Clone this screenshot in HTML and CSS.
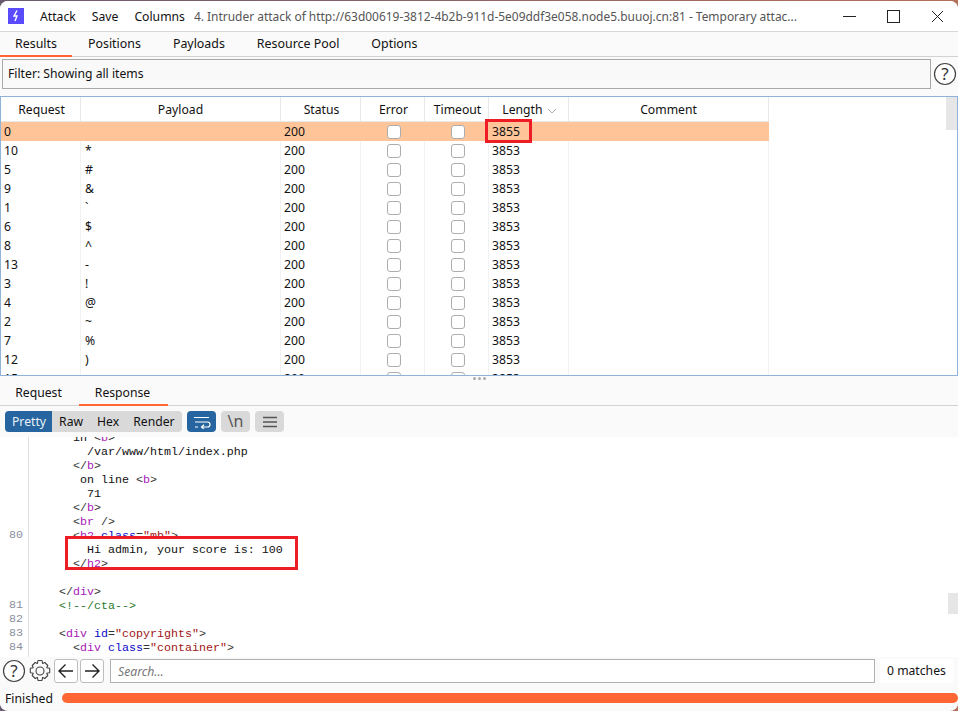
FILE: index.html
```html
<!DOCTYPE html>
<html lang="en">
<head>
<meta charset="utf-8">
<title>Intruder attack</title>
<link rel="stylesheet" href="styles.css">
</head>
<body>
<div class="window">
  <header class="titlebar">
    <svg class="logo" width="16" height="16" viewBox="0 0 16 16"><rect width="16" height="16" fill="#5a4bff"/><path d="M9 2.500 6 8h3l-2 5" fill="none" stroke="#fff" stroke-width="1.400"/></svg>
    <nav class="menu"><span>Attack</span><span>Save</span><span>Columns</span></nav>
    <div class="title">4. Intruder attack of http://63d00619-3812-4b2b-911d-5e09ddf3e058.node5.buuoj.cn:81 - Temporary attac...</div>
    <div class="winctl">
      <svg width="13" height="13" viewBox="0 0 13 13"><path d="M0 6.500h13" stroke="#222" stroke-width="1"/></svg>
      <svg width="13" height="13" viewBox="0 0 13 13"><rect x=".5" y=".5" width="12" height="12" fill="none" stroke="#222"/></svg>
      <svg width="13" height="13" viewBox="0 0 13 13"><path d="M1 1l11 11M12 1 1 12" stroke="#222" stroke-width="1"/></svg>
    </div>
  </header>
  <nav class="tabs main-tabs">
    <span class="tab active">Results</span><span class="tab">Positions</span><span class="tab">Payloads</span><span class="tab">Resource Pool</span><span class="tab">Options</span>
  </nav>
  <div class="filter-row">
    <div class="filter">Filter: Showing all items</div>
    <svg class="help" width="24" height="24" viewBox="0 0 24 24"><circle cx="12" cy="12" r="10.500" fill="#fff" stroke="#444" stroke-width="1.200"/><text x="12" y="17.500" text-anchor="middle" class="qmark">?</text></svg>
  </div>
  <section class="table">
    <div class="row head">
      <div class="nudge">Request</div><div>Payload</div><div class="nudge">Status</div><div class="nudge">Error</div><div class="nudge">Timeout</div>
      <div class="nudge">Length <svg width="10" height="6" viewBox="0 0 10 6"><path d="M1 1l4 4 4-4" fill="none" stroke="#aaa"/></svg></div><div>Comment</div>
    </div>
    <div class="row sel"><div>0</div><div class="pl"></div><div class="st">200</div><div class="c"><i class="cb"></i></div><div class="c"><i class="cb"></i></div><div class="len">3855</div><div></div></div>
    <div class="row"><div>10</div><div class="pl">*</div><div class="st">200</div><div class="c"><i class="cb"></i></div><div class="c"><i class="cb"></i></div><div class="len">3853</div><div></div></div>
    <div class="row"><div>5</div><div class="pl">#</div><div class="st">200</div><div class="c"><i class="cb"></i></div><div class="c"><i class="cb"></i></div><div class="len">3853</div><div></div></div>
    <div class="row"><div>9</div><div class="pl">&amp;</div><div class="st">200</div><div class="c"><i class="cb"></i></div><div class="c"><i class="cb"></i></div><div class="len">3853</div><div></div></div>
    <div class="row"><div>1</div><div class="pl">`</div><div class="st">200</div><div class="c"><i class="cb"></i></div><div class="c"><i class="cb"></i></div><div class="len">3853</div><div></div></div>
    <div class="row"><div>6</div><div class="pl">$</div><div class="st">200</div><div class="c"><i class="cb"></i></div><div class="c"><i class="cb"></i></div><div class="len">3853</div><div></div></div>
    <div class="row"><div>8</div><div class="pl">^</div><div class="st">200</div><div class="c"><i class="cb"></i></div><div class="c"><i class="cb"></i></div><div class="len">3853</div><div></div></div>
    <div class="row"><div>13</div><div class="pl">-</div><div class="st">200</div><div class="c"><i class="cb"></i></div><div class="c"><i class="cb"></i></div><div class="len">3853</div><div></div></div>
    <div class="row"><div>3</div><div class="pl">!</div><div class="st">200</div><div class="c"><i class="cb"></i></div><div class="c"><i class="cb"></i></div><div class="len">3853</div><div></div></div>
    <div class="row"><div>4</div><div class="pl">@</div><div class="st">200</div><div class="c"><i class="cb"></i></div><div class="c"><i class="cb"></i></div><div class="len">3853</div><div></div></div>
    <div class="row"><div>2</div><div class="pl">~</div><div class="st">200</div><div class="c"><i class="cb"></i></div><div class="c"><i class="cb"></i></div><div class="len">3853</div><div></div></div>
    <div class="row"><div>7</div><div class="pl">%</div><div class="st">200</div><div class="c"><i class="cb"></i></div><div class="c"><i class="cb"></i></div><div class="len">3853</div><div></div></div>
    <div class="row"><div>12</div><div class="pl">)</div><div class="st">200</div><div class="c"><i class="cb"></i></div><div class="c"><i class="cb"></i></div><div class="len">3853</div><div></div></div>
    <div class="row"><div>15</div><div class="pl">_</div><div class="st">200</div><div class="c"><i class="cb"></i></div><div class="c"><i class="cb"></i></div><div class="len">3853</div><div></div></div>
    <div class="scroll-thumb table-thumb"></div>
    <div class="mark mark-len"></div>
  </section>
  <div class="splitter"><i></i><i></i><i></i></div>
  <nav class="tabs sub-tabs"><span class="tab">Request</span><span class="tab active">Response</span></nav>
  <div class="toolbar">
    <div class="seg"><span class="on">Pretty</span><span>Raw</span><span>Hex</span><span>Render</span></div>
    <span class="tool on"><svg width="20" height="14" viewBox="0 0 20 14"><path d="M2 2.500h15M3 7h12.500a2.500 2.500 0 0 1 0 5H10M12 9.800 9.500 12l2.500 2.200M3 12h3" fill="none" stroke="#fff" stroke-width="1.200"/></svg></span>
    <span class="tool nl">\n</span>
    <span class="tool"><svg width="16" height="14" viewBox="0 0 16 14"><path d="M1 2.500h14M1 7h14M1 11.500h14" stroke="#555" stroke-width="1.400"/></svg></span>
  </div>
  <section class="editor">
    <div class="gutter"><span></span><span></span><span></span><span></span><span></span><span></span><span></span><span>80</span><span></span><span></span><span></span><span></span><span>81</span><span>82</span><span>83</span><span>84</span></div>
<pre class="code">      in <s>&lt;</s><b>b</b><s>&gt;</s>
        /var/www/html/index.php
      <s>&lt;/</s><b>b</b><s>&gt;</s>
       on line <s>&lt;</s><b>b</b><s>&gt;</s>
        71
      <s>&lt;/</s><b>b</b><s>&gt;</s>
      <s>&lt;</s><b>br</b> <s>/&gt;</s>
      <s>&lt;</s><b>h2</b> <u>class</u><s>=</s><em>"mb"</em><s>&gt;</s>
        Hi admin, your score is: 100
      <s>&lt;/</s><b>h2</b><s>&gt;</s>

    <s>&lt;/</s><b>div</b><s>&gt;</s>
    <q>&lt;!--/cta--&gt;</q>

    <s>&lt;</s><b>div</b> <u>id</u><s>=</s><em>"copyrights"</em><s>&gt;</s>
      <s>&lt;</s><b>div</b> <u>class</u><s>=</s><em>"container"</em><s>&gt;</s></pre>
    <div class="scroll-thumb editor-thumb"></div>
    <div class="mark mark-score"></div>
  </section>
  <div class="searchbar">
    <svg width="24" height="24" viewBox="0 0 24 24"><circle cx="12" cy="12" r="10.500" fill="#fff" stroke="#444" stroke-width="1.200"/><text x="12" y="17.500" text-anchor="middle" class="qmark">?</text></svg>
    <svg class="gear" width="24" height="24" viewBox="0 0 24 24"><path d="M10 1.500h4l.6 3 2.200-1 3 3-1.100 2.200 3 .6v4.400l-3 .6 1.100 2.200-3 3-2.200-1.100-.6 3.100h-4l-.6-3.100-2.200 1.100-3-3 1.100-2.200-3-.6V9.300l3-.6-1.100-2.200 3-3 2.200 1z" fill="none" stroke="#444" stroke-width="1.100" stroke-linejoin="round"/><circle cx="12" cy="12" r="4" fill="none" stroke="#444" stroke-width="1.100"/></svg>
    <span class="nav-btn"><svg width="18" height="16" viewBox="0 0 18 16"><path d="M16 8H2M8.500 1.500 2 8l6.500 6.500" fill="none" stroke="#222" stroke-width="1.400"/></svg></span>
    <span class="nav-btn"><svg width="18" height="16" viewBox="0 0 18 16"><path d="M2 8h14M9.500 1.500 16 8l-6.500 6.500" fill="none" stroke="#222" stroke-width="1.400"/></svg></span>
    <div class="search">Search...</div>
    <div class="matches">0 matches</div>
  </div>
  <footer class="status"><span>Finished</span><div class="progress"></div></footer>
</div>
</body>
</html>
```
FILE: styles.css
```css
* { box-sizing: border-box; }
html, body { margin: 0; padding: 0; }
body { width: 958px; height: 711px; overflow: hidden; background: linear-gradient(90deg, #6a5a70, #b5705a); font: 12.2px/17px "Noto Sans", "Open Sans", sans-serif; color: #111; }
.window { width: 958px; height: 710px; margin-top: 1px; background: #fafafa; border-radius: 8px; overflow: hidden; display: flex; flex-direction: column; }

.titlebar { height: 31px; flex: none; background: #fff; display: flex; align-items: center; padding-left: 8px; border-bottom: 1px solid #d8d8d8; }
.logo { flex: none; }
.menu { display: flex; gap: 16px; margin-left: 16px; }
.title { margin-left: 9px; flex: 1; min-width: 0; font-size: 11.95px; color: #555; white-space: nowrap; overflow: hidden; }
.winctl { display: flex; gap: 31px; padding-right: 14px; align-items: center; flex: none; }

.tabs { display: flex; flex: none; background: #fafafa; border-bottom: 1px solid #d2d2d2; }
.main-tabs { height: 25px; font-size: 12.4px; }
.tab { padding: 3px 16px 0; height: 25px; }
.tab.active { border-bottom: 2px solid #ff6633; }
.main-tabs .tab:first-child { padding-left: 15px; width: 72px; }

.filter-row { height: 39px; flex: none; display: flex; padding: 2px 1px 0 2px; gap: 2px; }
.filter { width: 930px; height: 30px; border: 1px solid #a8a8a8; background: #f9f9f9; padding: 5px 5px 0 5px; }
.help { margin-top: 3px; flex: none; }
.qmark { font: 17px "Noto Sans", sans-serif; fill: #333; }

.table { position: relative; height: 280px; flex: none; background: #fff; border: 1px solid #8fb3d9; overflow: hidden; }
.row { display: grid; grid-template-columns: 80px 200px 80px 64px 64px 80px 200px; width: 768px; height: 19px; line-height: 19px; }
.row > div { padding-left: 3px; border-right: 1px solid #f2f2f2; white-space: nowrap; }
.row .c { padding: 0 0 0 3px; display: flex; align-items: center; justify-content: center; }
.row .pl { padding-left: 4px; }
.row .st { padding-left: 3px; }
.row .len { padding-left: 3px; }
.head { height: 25px; line-height: 25px; border-bottom: 1px solid #e8e8e8; }
.row.head > div { padding: 0; text-align: center; border-right: 1px solid #e8e8e8; }
.row.head > .nudge { padding-left: 2px; }
.head svg { margin-left: 1px; }
.sel { background: #ffc599; }
.sel > div { border-right-color: transparent; }
.cb { display: block; width: 14px; height: 14px; background: #fff; border: 1px solid #adadad; border-radius: 3px; }

.scroll-thumb { position: absolute; background: #e6e6e6; width: 11px; }
.table-thumb { right: 0; top: 0; height: 33px; }
.editor-thumb { right: 0; top: 156px; height: 21px; width: 10px; }
.mark { position: absolute; border: 3px solid #ee1c25; }
.mark-len { left: 484px; top: 22px; width: 47px; height: 24px; }
.mark-score { left: 65px; top: 99px; width: 233px; height: 34px; }

.splitter { height: 5px; flex: none; display: flex; justify-content: center; gap: 2px; background: #fafafa; padding-top: 1px; }
.splitter i { width: 3px; height: 3px; border-radius: 50%; background: #aaa; }
.sub-tabs { height: 25px; }
.sub-tabs .tab { padding: 3px 2px 0 0; width: 89px; text-align: center; }
.sub-tabs .tab:first-child { width: 79px; }

.toolbar { height: 31px; flex: none; display: flex; align-items: flex-start; padding: 5px 5px 0; background: #fafafa; }
.seg { display: flex; flex: none; height: 21px; background: #d9d9d9; border-radius: 4px; overflow: hidden; line-height: 21px; width: 177px; }
.seg span { padding: 0 7px; }
.seg .on { background: #26659f; color: #eaf2f8; padding-right: 6px; }
.tool { width: 29px; height: 21px; background: #d9d9d9; border-radius: 4px; margin-left: 5px; display: flex; align-items: center; justify-content: center; color: #555; }
.tool.on { background: #26659f; }
.nl { font-size: 16px; }

.editor { position: relative; height: 220px; flex: none; background: #fff; display: flex; overflow: hidden; }
.gutter { width: 29px; flex: none; margin-top: -7px; border-right: 1px solid #e0e0e0; display: flex; flex-direction: column; color: #8a8f9c; font: 11.67px/14px "Liberation Mono", monospace; text-align: right; padding-right: 5px; }
.gutter span { height: 14px; flex: none; }
.code { margin: -6px 0 0 2px; font: 11.67px/14px "Liberation Mono", "Courier New", monospace; color: #111; }
.code s { text-decoration: none; color: #333; }
.code b { font-weight: normal; color: #a818b8; }
.code u { text-decoration: none; color: #0a0ac8; }
.code em { font-style: normal; color: #a11616; }
.code q { quotes: none; color: #2c7a2c; }

.searchbar { height: 28px; flex: none; display: flex; align-items: center; padding: 0 0 0 2px; background: #fafafa; gap: 2px; }
.nav-btn { width: 24px; height: 24px; background: #fff; border: 1px solid #bdbdbd; border-radius: 3px; display: flex; align-items: center; justify-content: center; }
.search { width: 765px; height: 24px; margin-left: 4px; border: 1px solid #b5aeb0; background: #fff; padding: 3px 7px; font-style: italic; color: #777; }
.matches { margin-left: 3px; padding-left: 7px; background: #fff; width: 73px; height: 24px; line-height: 24px; }

.status { height: 24px; flex: none; display: flex; align-items: center; padding: 2px 0 0 5px; background: #fafafa; }
.progress { flex: 1; height: 10px; margin-left: 9px; border-radius: 5px; background: #ff6633; }
```
